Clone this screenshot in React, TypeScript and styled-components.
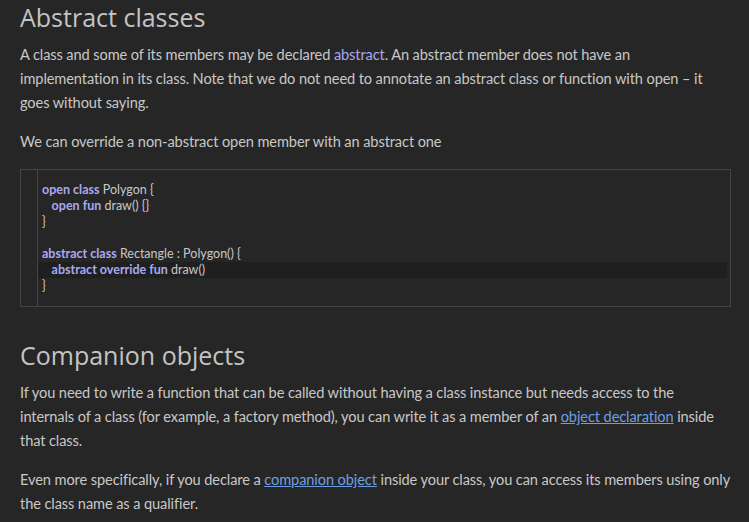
import React from 'react';
import styled, { createGlobalStyle } from 'styled-components';

const Global = createGlobalStyle`
	body {
		margin: 0;
		background: #262626;
		font-family: Lato, "Open Sans", sans-serif;
		color: #c8c8c8;
	}
`;

const Page = styled.div`
	padding: 0 18px 0 20px;
	margin-top: -1px;
`;

const Heading = styled.h2`
	font-family: "Open Sans", sans-serif;
	font-weight: 400;
	font-size: 25px;
	color: #c4c4c4;
	margin: 0 0 8px;
	line-height: 36px;
`;

const Para = styled.p`
	font-size: 14.6px;
	letter-spacing: -0.1px;
	line-height: 24px;
	margin: 0 0 15px;
`;

const Term = styled.span`
	color: #a8a8f5;
`;

const Link = styled.a`
	color: #6d9fe0;
	text-decoration: underline;
`;

const CodeBox = styled.div`
	border: 1px solid #444;
	display: flex;
	margin: 14px 0 30px;
`;

const Gutter = styled.div`
	width: 16px;
	border-right: 1px solid #444;
`;

const CodeBody = styled.div`
	flex: 1;
	padding: 12px 3px 12px 0;
	font-family: Lato, sans-serif;
	font-size: 12.5px;
	line-height: 16px;
	color: #c8c8c8;
`;

const Line = styled.div<{ $active?: boolean }>`
	padding-left: 4px;
	white-space: pre;
	min-height: 16px;
	background: ${p => (p.$active ? '#1f1f1f' : 'transparent')};
`;

const Kw = styled.span`
	color: #a9a9ef;
	font-weight: 700;
`;

export default function App() {
	return (
		<>
			<Global />
			<Page>
				<Heading>Abstract classes</Heading>
				<Para>
					A class and some of its members may be declared <Term>abstract</Term>. An abstract member does not have an implementation in its class. Note that we do not need to annotate an abstract class or function with open – it goes without saying.
				</Para>
				<Para>We can override a non-abstract open member with an abstract one</Para>
				<CodeBox>
					<Gutter />
					<CodeBody>
						<Line><Kw>open class</Kw> Polygon {'{'}</Line>
						<Line>{'   '}<Kw>open fun</Kw> draw() {'{}'}</Line>
						<Line>{'}'}</Line>
						<Line />
						<Line><Kw>abstract class</Kw> Rectangle : Polygon() {'{'}</Line>
						<Line $active>{'   '}<Kw>abstract override fun</Kw> draw()</Line>
						<Line>{'}'}</Line>
					</CodeBody>
				</CodeBox>
				<Heading>Companion objects</Heading>
				<Para>
					If you need to write a function that can be called without having a class instance but needs access to the internals of a class (for example, a factory method), you can write it as a member of an <Link>object declaration</Link> inside that class.
				</Para>
				<Para>
					Even more specifically, if you declare a <Link>companion object</Link> inside your class, you can access its members using only the class name as a qualifier.
				</Para>
			</Page>
		</>
	);
}
